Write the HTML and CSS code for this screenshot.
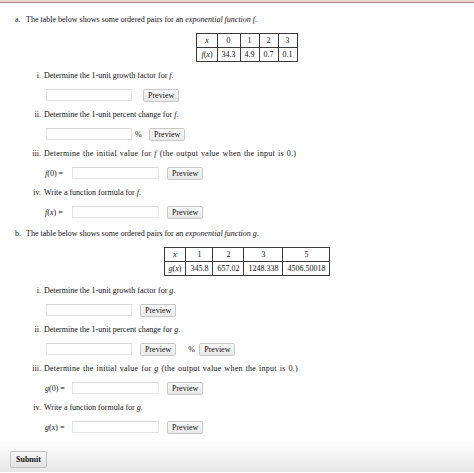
FILE: index.html
```html
<!DOCTYPE html>
<html>
<head>
<meta charset="utf-8">
<link rel="stylesheet" href="styles.css">
</head>
<body>
<div class="topbar"></div>
<section class="part part-a">
  <p class="lead"><span class="mark">a.</span><span>The table below shows some ordered pairs for an <i>exponential function f</i>.</span></p>
  <div class="tablewrap">
    <table>
      <tr><td><i>x</i></td><td>0</td><td>1</td><td>2</td><td>3</td></tr>
      <tr><td><i>f</i>(<i>x</i>)</td><td>34.3</td><td>4.9</td><td>0.7</td><td>0.1</td></tr>
    </table>
  </div>
  <ol class="subs">
    <li class="sub">
      <p class="q"><span class="num">i.</span><span>Determine the 1-unit growth factor for <i>f</i>.</span></p>
      <div class="row row-plain"><span class="inp"></span><button class="btn btn-a1">Preview</button></div>
    </li>
    <li class="sub">
      <p class="q"><span class="num">ii.</span><span>Determine the 1-unit percent change for <i>f</i>.</span></p>
      <div class="row row-plain"><span class="inp"></span><span class="pct">%</span><button class="btn btn-after-pct">Preview</button></div>
    </li>
    <li class="sub">
      <p class="q"><span class="num">iii.</span><span class="wide-text">Determine the initial value for <i>f</i> (the output value when the input is 0.)</span></p>
      <div class="row row-label"><span class="flabel"><i>f</i>(0) =</span><span class="inp inp-wide"></span><button class="btn">Preview</button></div>
    </li>
    <li class="sub">
      <p class="q"><span class="num">iv.</span><span>Write a function formula for <i>f</i>.</span></p>
      <div class="row row-label"><span class="flabel"><i>f</i>(<i>x</i>) =</span><span class="inp inp-wide"></span><button class="btn">Preview</button></div>
    </li>
  </ol>
</section>
<section class="part part-b">
  <p class="lead"><span class="mark">b.</span><span>The table below shows some ordered pairs for an <i>exponential function g</i>.</span></p>
  <div class="tablewrap">
    <table>
      <tr><td><i>x</i></td><td>1</td><td>2</td><td>3</td><td>5</td></tr>
      <tr><td><i>g</i>(<i>x</i>)</td><td>345.8</td><td>657.02</td><td>1248.338</td><td>4506.50018</td></tr>
    </table>
  </div>
  <ol class="subs subs-b">
    <li class="sub">
      <p class="q"><span class="num">i.</span><span>Determine the 1-unit growth factor for <i>g</i>.</span></p>
      <div class="row row-plain"><span class="inp"></span><button class="btn">Preview</button></div>
    </li>
    <li class="sub">
      <p class="q"><span class="num">ii.</span><span>Determine the 1-unit percent change for <i>g</i>.</span></p>
      <div class="row row-plain"><span class="inp"></span><button class="btn">Preview</button><span class="pct pct-b">%</span><button class="btn btn-after-pct-b">Preview</button></div>
    </li>
    <li class="sub">
      <p class="q"><span class="num">iii.</span><span class="wide-text">Determine the initial value for <i>g</i> (the output value when the input is 0.)</span></p>
      <div class="row row-label"><span class="flabel"><i>g</i>(0) =</span><span class="inp inp-wide"></span><button class="btn">Preview</button></div>
    </li>
    <li class="sub">
      <p class="q"><span class="num">iv.</span><span>Write a function formula for <i>g</i>.</span></p>
      <div class="row row-label"><span class="flabel"><i>g</i>(<i>x</i>) =</span><span class="inp inp-wide"></span><button class="btn">Preview</button></div>
    </li>
  </ol>
</section>
<div class="footer"><button class="submit">Submit</button></div>
</body>
</html>
```
FILE: styles.css
```css
html, body {
  margin: 0;
  padding: 0;
  background: #fff;
}
body {
  font-family: "Liberation Serif", "Times New Roman", serif;
  font-size: 8px;
  color: #111;
  height: 473px;
  overflow: hidden;
}
.topbar {
  height: 2px;
  background: #f1d4ce;
  border-bottom: 1px solid #a8857f;
}
.part-a {
  padding-top: 12px;
}
.part-b {
  margin-top: 10px;
}
.lead,
.q {
  margin: 0;
  height: 10px;
  line-height: 10px;
  display: flex;
  white-space: nowrap;
}
.mark {
  width: 11px;
  margin-left: 15px;
}
.wide-text {
  word-spacing: 0.7px;
  letter-spacing: 0.25px;
}
.tablewrap {
  display: flex;
  justify-content: center;
  padding-left: 26px;
  padding-right: 6px;
  margin-top: 8px;
}
table {
  border-collapse: collapse;
  border: 1px solid #3a3a3a;
}
td {
  border: 1px solid #3a3a3a;
  height: 13px;
  line-height: 13px;
  padding: 0 4px;
  text-align: center;
  white-space: nowrap;
}
.subs {
  list-style: none;
  margin: 9px 0 0;
  padding: 0;
}
.subs-b {
  margin-top: 10px;
}
.sub + .sub {
  margin-top: 8px;
}
.num {
  width: 15px;
  margin-left: 26px;
  margin-right: 3px;
  text-align: right;
}
.row {
  display: flex;
  align-items: center;
  height: 14px;
  margin-top: 7px;
}
.row-plain {
  padding-left: 46px;
}
.row-label {
  padding-left: 45px;
}
.flabel {
  width: 27px;
  white-space: nowrap;
}
.inp {
  width: 84px;
  height: 10px;
  border: 1px solid #e4e4e4;
  border-top-color: #d8d8d8;
  background: #fff;
}
.inp-wide {
  width: 85px;
}
.btn {
  font-family: "Liberation Serif", "Times New Roman", serif;
  font-size: 8px;
  height: 13px;
  line-height: 11px;
  padding: 0 4px;
  margin: 0 0 0 8px;
  border: 1px solid #c9c9c9;
  border-radius: 2px;
  background: linear-gradient(#f9f9f9, #e9e9e9);
  color: #111;
}
.btn-a1 {
  margin-left: 11px;
}
.pct {
  margin-left: 3px;
  width: 6px;
}
.btn-after-pct {
  margin-left: 8px;
}
.pct-b {
  margin-left: 12px;
}
.btn-after-pct-b {
  margin-left: 5px;
}
.footer {
  margin-top: 5px;
  height: 33px;
  padding-top: 12px;
  box-sizing: border-box;
  background: linear-gradient(#ffffff, #f6f6f6 40%, #e6e6e6);
}
.submit {
  font-family: "Liberation Serif", "Times New Roman", serif;
  font-size: 8px;
  font-weight: bold;
  height: 17px;
  padding: 0 5px;
  margin-left: 10px;
  border: 1px solid #c4c4c4;
  border-radius: 2px;
  background: linear-gradient(#f7f7f7, #e2e2e2);
  color: #111;
}
```
